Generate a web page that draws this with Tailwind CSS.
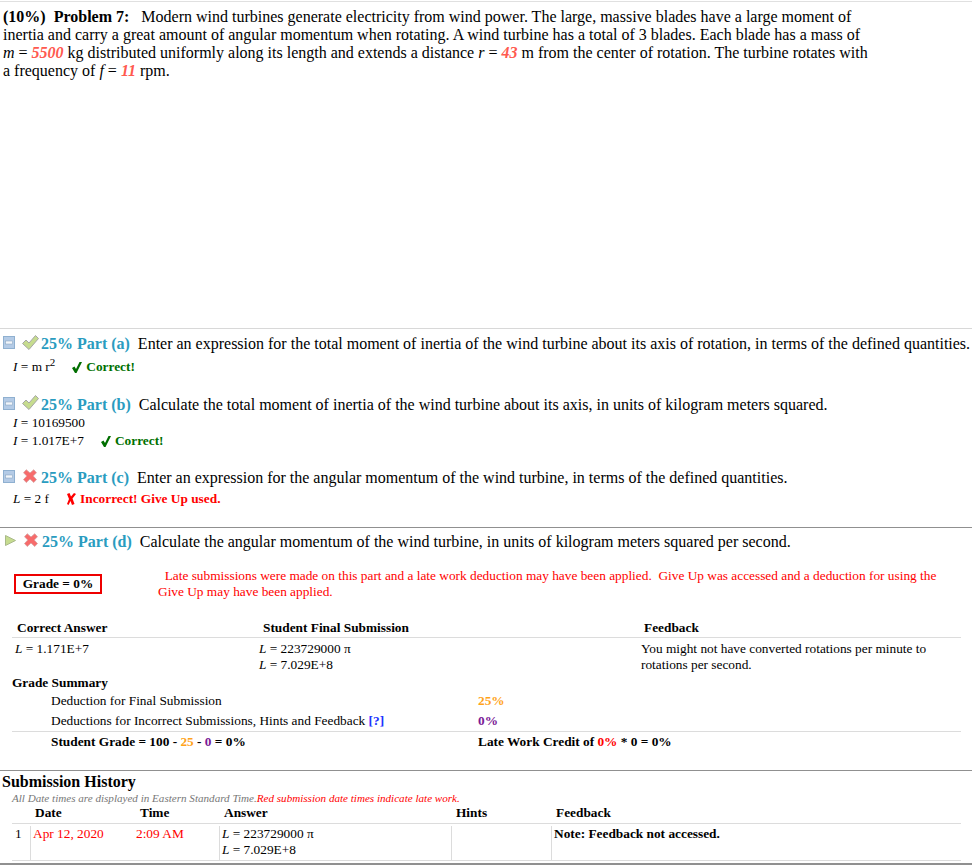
<!DOCTYPE html>
<html lang="en">
<head>
  <meta charset="UTF-8" />
  <title>Problem 7</title>
  <script src="https://cdn.jsdelivr.net/npm/@tailwindcss/browser@4"></script>
</head>
<body class="bg-white text-black font-['Liberation_Serif',serif] text-[16px] overflow-hidden">
  <div class="w-[972px] h-[865px] overflow-hidden">
    <!-- problem statement -->
    <div class="mt-[1px] border-t border-[#e0e0e0] h-[327px] pl-[3px] pt-[6px] leading-[18px]">
      <p class="w-[870px]"><b>(10%)&nbsp; Problem 7:</b>&nbsp;&nbsp; Modern wind turbines generate electricity from wind power. The large, massive blades have a large moment of inertia and carry a great amount of angular momentum when rotating. A wind turbine has a total of 3 blades. Each blade has a mass of <i>m</i> = <b class="text-[#ff5a4f]"><i>5500</i></b> kg distributed uniformly along its length and extends a distance <i>r</i> = <b class="text-[#ff5a4f]"><i>43</i></b> m from the center of rotation. The turbine rotates with a frequency of <i>f</i> = <b class="text-[#ff5a4f]"><i>11</i></b> rpm.</p>
    </div>

    <!-- part a -->
    <div class="border-t border-[#d8d8d8] h-[62px] pt-[5px]">
      <div class="flex items-center h-[20px] pl-[3px] whitespace-nowrap">
        <svg class="w-[12px] h-[13px] -mt-[3px]" viewBox="0 0 12 13"><rect x=".5" y=".5" width="11" height="12" fill="#b4cbe6" stroke="#8fb0d0"/><rect x="2.500" y="5" width="7" height="3" fill="#f2f6fb" stroke="#7f9db9" stroke-width=".5"/></svg>
        <svg class="w-[17px] h-[15px] ml-[7px] -mt-[4px]" viewBox="0 0 17 15"><path d="M.5 8.500L4 5l3 3L13.500.5 16.500 3.500 7 14.500z" fill="#c6dc8f" stroke="#a6a6a6"/></svg>
        <b class="ml-[2px] text-[#2a9cc0]">25% Part (a)</b>
        <span class="ml-[8px]">Enter an expression for the total moment of inertia of the wind turbine about its axis of rotation, in terms of the defined quantities.</span>
      </div>
      <div class="flex items-center h-[18px] pl-[13px] mt-[4px] text-[13.33px]">
        <span><i>I</i> = m r<sup class="text-[11px]">2</sup></span>
        <svg class="w-[10px] h-[11px] ml-[17px]" viewBox="0 0 10 11"><path d="M0 6l2.500-1.500L4 7 7.500 0H10L4.500 11H3z" fill="#006e00"/></svg>
        <b class="ml-[4px] text-[#007000]">Correct!</b>
      </div>
    </div>

    <!-- part b -->
    <div class="h-[74px] pt-[5px]">
      <div class="flex items-center h-[19px] pl-[3px] whitespace-nowrap">
        <svg class="w-[12px] h-[13px] -mt-[3px]" viewBox="0 0 12 13"><rect x=".5" y=".5" width="11" height="12" fill="#b4cbe6" stroke="#8fb0d0"/><rect x="2.500" y="5" width="7" height="3" fill="#f2f6fb" stroke="#7f9db9" stroke-width=".5"/></svg>
        <svg class="w-[17px] h-[15px] ml-[7px] -mt-[4px]" viewBox="0 0 17 15"><path d="M.5 8.500L4 5l3 3L13.500.5 16.500 3.500 7 14.500z" fill="#c6dc8f" stroke="#a6a6a6"/></svg>
        <b class="ml-[2px] text-[#2a9cc0]">25% Part (b)</b>
        <span class="ml-[8px]">Calculate the total moment of inertia of the wind turbine about its axis, in units of kilogram meters squared.</span>
      </div>
      <div class="flex items-center h-[18px] pl-[13px] text-[13.33px]"><span><i>I</i> = 10169500</span></div>
      <div class="flex items-center h-[18px] pl-[13px] text-[13.33px]">
        <span><i>I</i> = 1.017E+7</span>
        <svg class="w-[10px] h-[11px] ml-[17px]" viewBox="0 0 10 11"><path d="M0 6l2.500-1.500L4 7 7.500 0H10L4.500 11H3z" fill="#006e00"/></svg>
        <b class="ml-[4px] text-[#007000]">Correct!</b>
      </div>
    </div>

    <!-- part c -->
    <div class="h-[64px] border-b border-[#909090] pt-[4px]">
      <div class="flex items-center h-[20px] pl-[3px] whitespace-nowrap">
        <svg class="w-[12px] h-[13px] -mt-[3px]" viewBox="0 0 12 13"><rect x=".5" y=".5" width="11" height="12" fill="#b4cbe6" stroke="#8fb0d0"/><rect x="2.500" y="5" width="7" height="3" fill="#f2f6fb" stroke="#7f9db9" stroke-width=".5"/></svg>
        <svg class="w-[14px] h-[14px] ml-[8px] -mt-[4px] mr-[2px]" viewBox="0 0 13 13"><path d="M3 .7l3.500 3L10 .7l2.500 2.800-3 3 3 3.300L10 12.500 6.500 9.300 3 12.500.5 9.800l3-3.300-3-3z" fill="#f76b6b" stroke="#d9a0a0" stroke-width=".8"/></svg>
        <b class="ml-[2px] text-[#2a9cc0]">25% Part (c)</b>
        <span class="ml-[8px]">Enter an expression for the angular momentum of the wind turbine, in terms of the defined quantities.</span>
      </div>
      <div class="flex items-center h-[18px] pl-[13px] mt-[2px] text-[13.33px]">
        <span><i>L</i> = 2 f</span>
        <svg class="w-[9px] h-[12px] ml-[18px]" viewBox="0 0 9 12"><path d="M0 1l2.500-1L4 3.500 7 0l2 1-3.500 4.500L7.500 11 5 12 3.500 8 1.500 12 0 11l2-5z" fill="#ff0000"/></svg>
        <b class="ml-[4px] text-[#ff0000]">Incorrect! Give Up used.</b>
      </div>
    </div>

    <!-- part d -->
    <div class="h-[243px] pt-[4px] border-b border-[#909090]">
      <div class="flex items-center h-[20px] pl-[5px] whitespace-nowrap">
        <svg class="w-[11px] h-[11px] -mt-[3px]" viewBox="0 0 11 11"><path d="M.5.500l10 5-10 5z" fill="#c6dc8f" stroke="#a9b98a"/></svg>
        <svg class="w-[14px] h-[14px] ml-[8px] -mt-[4px] mr-[2px]" viewBox="0 0 13 13"><path d="M3 .7l3.500 3L10 .7l2.500 2.800-3 3 3 3.300L10 12.500 6.500 9.300 3 12.500.5 9.800l3-3.300-3-3z" fill="#f76b6b" stroke="#d9a0a0" stroke-width=".8"/></svg>
        <b class="ml-[2px] text-[#2a9cc0]">25% Part (d)</b>
        <span class="ml-[8px]">Calculate the angular momentum of the wind turbine, in units of kilogram meters squared per second.</span>
      </div>

      <div class="flex mt-[16px] text-[13.33px]">
        <div class="ml-[14px] mt-[6px] w-[88px] h-[20px] border-2 border-[#ee0000] font-bold flex items-center justify-center shrink-0">Grade = 0%</div>
        <p class="ml-[56px] w-[790px] leading-[16px] text-[#ff0000]">&nbsp;&nbsp;Late submissions were made on this part and a late work deduction may have been applied.&nbsp; Give Up was accessed and a deduction for using the Give Up may have been applied.</p>
      </div>

      <!-- correct answer table -->
      <div class="ml-[12px] w-[949px] mt-[17px] text-[13.33px]">
        <div class="grid grid-cols-[246px_381px_1fr] h-[21px] pt-[2px] items-center border-b border-[#dcdcdc] font-bold leading-none">
          <span class="pl-[5px]">Correct Answer</span><span class="pl-[5px]">Student Final Submission</span><span class="pl-[5px]">Feedback</span>
        </div>
        <div class="grid grid-cols-[246px_381px_1fr] leading-[16px] pt-[3px]">
          <span class="pl-[3px]"><i>L</i> = 1.171E+7</span>
          <span class="pl-[1px]"><i>L</i> = 223729000 π<br><i>L</i> = 7.029E+8</span>
          <span class="pl-[2px]">You might not have converted rotations per minute to rotations per second.</span>
        </div>
      </div>

      <!-- grade summary -->
      <div class="ml-[12px] w-[949px] text-[13.33px] mt-[1px]">
        <div class="font-bold h-[17px] flex items-center">Grade Summary</div>
        <div class="grid grid-cols-[466px_1fr]">
          <span class="pl-[39px] h-[20px] flex items-center">Deduction for Final Submission</span><b class="text-[#ffa31a] h-[20px] flex items-center">25%</b>
          <span class="pl-[39px] h-[20px] flex items-center"><span>Deductions for Incorrect Submissions, Hints and Feedback <b class="text-[#2233ff]">[?]</b></span></span><b class="text-[#7a1a96] h-[20px] flex items-center">0%</b>
        </div>
        <div class="grid grid-cols-[466px_1fr] border-t border-[#dcdcdc] h-[21px] items-center font-bold">
          <span class="pl-[39px]">Student Grade = 100 - <span class="text-[#ffa31a]">25</span> - <span class="text-[#7a1a96]">0</span> = 0%</span>
          <span>Late Work Credit of <span class="text-[#ff0000]">0%</span> * 0 = 0%</span>
        </div>
      </div>
    </div>

    <!-- submission history -->
    <div>
      <h3 class="pl-[2px] font-bold text-[16px] leading-[19px] pt-[1px]">Submission History</h3>
      <p class="pl-[12px] text-[11.1px] italic leading-[14px] h-[12px] text-[#777]">All Date times are displayed in Eastern Standard Time.<span class="text-[#ff0000]">Red submission date times indicate late work.</span></p>
      <div class="ml-[12px] w-[949px] text-[13.33px]">
        <div class="grid grid-cols-[18px_105px_84px_232px_100px_1fr] h-[21px] items-center border-b border-[#dcdcdc] font-bold">
          <span></span><span class="pl-[5px]">Date</span><span class="pl-[5px]">Time</span><span class="pl-[5px]">Answer</span><span class="pl-[5px]">Hints</span><span class="pl-[5px]">Feedback</span>
        </div>
        <div class="grid grid-cols-[18px_105px_84px_232px_100px_1fr] h-[37px] border-b border-[#dcdcdc] leading-[16px] pt-[2px]">
          <span class="pl-[3px]">1</span>
          <span class="text-[#ff0000] border-l border-[#dcdcdc] pl-[2px]">Apr 12, 2020</span>
          <span class="text-[#ff0000] pl-[1px]">2:09 AM</span>
          <span class="border-l border-[#dcdcdc] pl-[2px]"><i>L</i> = 223729000 π<br><i>L</i> = 7.029E+8</span>
          <span class="border-l border-[#dcdcdc]"></span>
          <b class="border-l border-[#dcdcdc] pl-[2px]">Note: Feedback not accessed.</b>
        </div>
      </div>
      <div class="border-b-2 border-[#909090] mt-[2px]"></div>
    </div>
  </div>
</body>
</html>
